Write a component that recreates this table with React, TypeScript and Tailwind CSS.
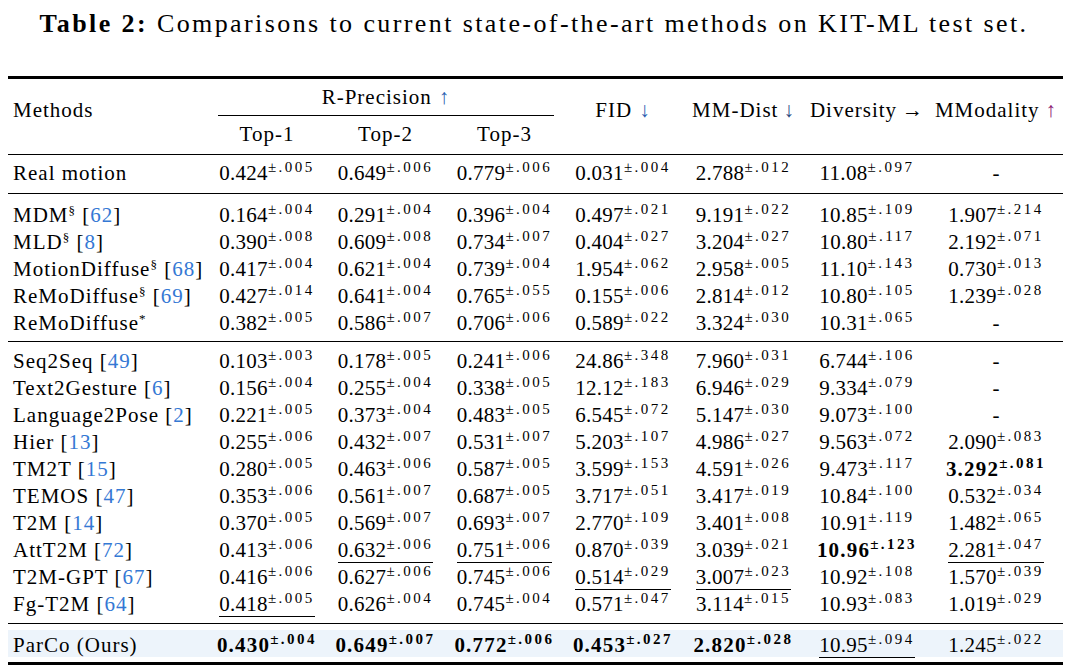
import React from 'react';

type Method = { name: string; mark?: string; cite?: string };
type Row = { method: Method; cells: string[] };

const realMotion: Row = {
  method: { name: 'Real motion' },
  cells: ['0.424 .005', '0.649 .006', '0.779 .006', '0.031 .004', '2.788 .012', '11.08 .097', '-'],
};

const diffusionRows: Row[] = [
  { method: { name: 'MDM', mark: '§', cite: '62' }, cells: ['0.164 .004', '0.291 .004', '0.396 .004', '0.497 .021', '9.191 .022', '10.85 .109', '1.907 .214'] },
  { method: { name: 'MLD', mark: '§', cite: '8' }, cells: ['0.390 .008', '0.609 .008', '0.734 .007', '0.404 .027', '3.204 .027', '10.80 .117', '2.192 .071'] },
  { method: { name: 'MotionDiffuse', mark: '§', cite: '68' }, cells: ['0.417 .004', '0.621 .004', '0.739 .004', '1.954 .062', '2.958 .005', '11.10 .143', '0.730 .013'] },
  { method: { name: 'ReMoDiffuse', mark: '§', cite: '69' }, cells: ['0.427 .014', '0.641 .004', '0.765 .055', '0.155 .006', '2.814 .012', '10.80 .105', '1.239 .028'] },
  { method: { name: 'ReMoDiffuse', mark: '*' }, cells: ['0.382 .005', '0.586 .007', '0.706 .006', '0.589 .022', '3.324 .030', '10.31 .065', '-'] },
];

const otherRows: Row[] = [
  { method: { name: 'Seq2Seq', cite: '49' }, cells: ['0.103 .003', '0.178 .005', '0.241 .006', '24.86 .348', '7.960 .031', '6.744 .106', '-'] },
  { method: { name: 'Text2Gesture', cite: '6' }, cells: ['0.156 .004', '0.255 .004', '0.338 .005', '12.12 .183', '6.946 .029', '9.334 .079', '-'] },
  { method: { name: 'Language2Pose', cite: '2' }, cells: ['0.221 .005', '0.373 .004', '0.483 .005', '6.545 .072', '5.147 .030', '9.073 .100', '-'] },
  { method: { name: 'Hier', cite: '13' }, cells: ['0.255 .006', '0.432 .007', '0.531 .007', '5.203 .107', '4.986 .027', '9.563 .072', '2.090 .083'] },
  { method: { name: 'TM2T', cite: '15' }, cells: ['0.280 .005', '0.463 .006', '0.587 .005', '3.599 .153', '4.591 .026', '9.473 .117', '*3.292 .081'] },
  { method: { name: 'TEMOS', cite: '47' }, cells: ['0.353 .006', '0.561 .007', '0.687 .005', '3.717 .051', '3.417 .019', '10.84 .100', '0.532 .034'] },
  { method: { name: 'T2M', cite: '14' }, cells: ['0.370 .005', '0.569 .007', '0.693 .007', '2.770 .109', '3.401 .008', '10.91 .119', '1.482 .065'] },
  { method: { name: 'AttT2M', cite: '72' }, cells: ['0.413 .006', '_0.632 .006', '_0.751 .006', '0.870 .039', '3.039 .021', '*10.96 .123', '_2.281 .047'] },
  { method: { name: 'T2M-GPT', cite: '67' }, cells: ['0.416 .006', '0.627 .006', '0.745 .006', '_0.514 .029', '_3.007 .023', '10.92 .108', '1.570 .039'] },
  { method: { name: 'Fg-T2M', cite: '64' }, cells: ['_0.418 .005', '0.626 .004', '0.745 .004', '0.571 .047', '3.114 .015', '10.93 .083', '1.019 .029'] },
];

const ours: Row = {
  method: { name: 'ParCo (Ours)' },
  cells: ['*0.430 .004', '*0.649 .007', '*0.772 .006', '*0.453 .027', '*2.820 .028', '_10.95 .094', '1.245 .022'],
};

const grid = 'grid grid-cols-[200px_118px_119px_119px_118px_123px_124px_134px]';

function Value({ raw }: { raw: string }) {
  if (raw === '-') return <span>-</span>;
  const bold = raw.startsWith('*');
  const under = raw.startsWith('_');
  const [value, spread] = raw.replace(/^[*_]/, '').split(' ');

  return (
    <span className={under ? 'inline-block border-b border-black leading-[19px]' : 'inline-block leading-[19px]'}>
      <span className={bold ? 'font-bold tracking-[1.2px]' : 'tracking-[0.3px]'}>{value}</span>
      <span
        className={
          bold
            ? 'relative -top-[8px] text-[15px] font-bold tracking-[2.5px]'
            : 'relative -top-[8px] text-[15px] tracking-[2.5px]'
        }
      >
        ±{spread}
      </span>
    </span>
  );
}

function MethodName({ method }: { method: Method }) {
  return (
    <span className="whitespace-nowrap tracking-[1px]">
      {method.name}
      {method.mark && <span className="relative -top-[7px] text-[13px]">{method.mark}</span>}
      {method.cite && (
        <>
          {' '}[<span className="text-[#3478d4]">{method.cite}</span>]
        </>
      )}
    </span>
  );
}

function TableRow({ row, tall }: { row: Row; tall?: boolean }) {
  return (
    <div className={`${grid} items-center ${tall ? 'h-[38px]' : 'h-[27px]'}`}>
      <div className="pl-[5px]">
        <MethodName method={row.method} />
      </div>
      {row.cells.map((cell, i) => (
        <div key={i} className="text-center">
          <Value raw={cell} />
        </div>
      ))}
    </div>
  );
}

export default function App() {
  return (
    <div className="w-[1068px] h-[665px] overflow-hidden bg-white text-black font-['Liberation_Serif',serif] text-[21px]">
      <div className="h-[76px] pt-[8px] text-center text-[26px] leading-[32px] tracking-[2.4px] whitespace-nowrap">
        <span className="font-bold">Table 2:</span> Comparisons to current state-of-the-art methods on KIT-ML test set.
      </div>

      <div className="ml-[8px] w-[1055px]">
        <div className="h-[3px] bg-black" />

        <div className={`${grid} grid-rows-[37px_38px] tracking-[1px]`}>
          <div className="row-span-2 flex items-center pb-[12px] pl-[5px]">Methods</div>
          <div className="col-span-3 flex items-center justify-center">
            <div className="mx-[10px] flex h-full w-full items-center justify-center border-b border-black pt-[2px]">
              R-Precision <span className="ml-[7px] text-[#2a5db0]">↑</span>
            </div>
          </div>
          <div className="row-span-2 flex items-center justify-center pb-[12px]">
            FID <span className="ml-[7px] text-[#2a5db0]">↓</span>
          </div>
          <div className="row-span-2 flex items-center justify-center pb-[12px] whitespace-nowrap">
            MM-Dist <span className="ml-[5px] text-[#2a4a80]">↓</span>
          </div>
          <div className="row-span-2 flex items-center justify-center pb-[12px] whitespace-nowrap">
            Diversity <span className="ml-[5px]">→</span>
          </div>
          <div className="row-span-2 flex items-center justify-center pb-[12px] whitespace-nowrap">
            MModality <span className="ml-[6px] text-[#8b2070]">↑</span>
          </div>
          <div className="flex items-center justify-center">Top-1</div>
          <div className="flex items-center justify-center">Top-2</div>
          <div className="flex items-center justify-center">Top-3</div>
        </div>

        <div className="h-px bg-black" />
        <TableRow row={realMotion} tall />
        <div className="h-px bg-black" />

        <div className="pt-[6px] pb-[6px]">
          {diffusionRows.map((row, i) => (
            <TableRow key={i} row={row} />
          ))}
        </div>
        <div className="h-px bg-black" />

        <div className="pt-[4px] pb-[7px]">
          {otherRows.map((row, i) => (
            <TableRow key={i} row={row} />
          ))}
        </div>
        <div className="h-px bg-black" />

        <div className="pt-[6px] pb-[5px]">
          <div className="bg-[#edf4fb]">
            <TableRow row={ours} />
          </div>
        </div>
        <div className="h-[3px] bg-black" />
      </div>
    </div>
  );
}
